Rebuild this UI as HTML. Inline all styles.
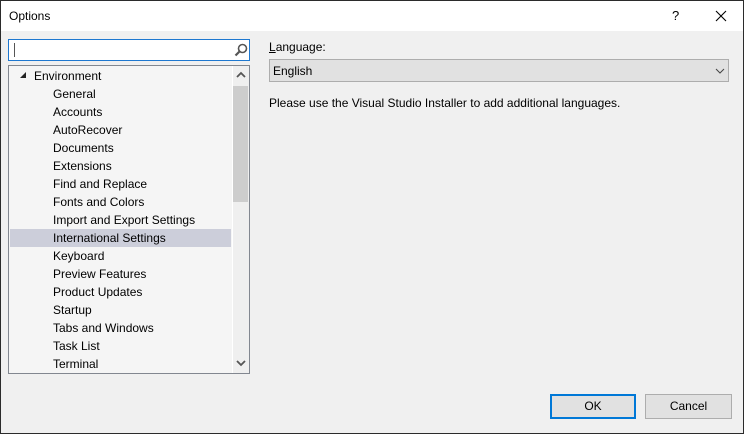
<!DOCTYPE html>
<html><head><style>
*{margin:0;padding:0;box-sizing:border-box}
body{width:744px;height:434px;background:#f0f0f0;font-family:"Liberation Sans",sans-serif;font-size:12px;color:#000;position:relative;overflow:hidden}
.win{position:absolute;left:0;top:0;width:744px;height:434px;border:1px solid #2b2b2b;}
.title{position:absolute;left:0;top:0;width:742px;height:30px;background:#fff}
.abs{position:absolute}
.row{position:absolute;left:1px;width:221px;height:18px;line-height:18px;padding-left:43px;white-space:nowrap}
</style></head><body>
<div class="win">
<div class="title">
 <div class="abs" style="left:8px;top:8px;font-size:12px">Options</div>
 <div class="abs" style="left:671px;top:7px;font-size:13px">?</div>
 <svg class="abs" style="left:714px;top:9px" width="12" height="12"><path d="M1 1L11 11M11 1L1 11" stroke="#000" stroke-width="1.1"/></svg>
</div>
<div class="abs" style="left:7px;top:38px;width:242px;height:22px;background:#fff;border:1px solid #1e78d0">
 <div class="abs" style="left:5px;top:3px;width:1px;height:14px;background:#555"></div>
 <svg class="abs" style="left:225px;top:3px" width="14" height="14"><circle cx="8.5" cy="5.5" r="4" fill="none" stroke="#555" stroke-width="1.6"/><path d="M5.5 8.5L1.5 12.5" stroke="#555" stroke-width="2.2"/></svg>
</div>
<div class="abs" style="left:7px;top:64px;width:242px;height:309px;background:#f5f5f5;border:1px solid #828790">
 <div class="abs" style="left:223px;top:0;width:17px;height:307px;background:#efefef;border-left:1px solid #fff"></div>
 <svg class="abs" style="left:227px;top:5px" width="10" height="8"><path d="M1 6L5 2L9 6" fill="none" stroke="#555" stroke-width="1.8"/></svg>
 <div class="abs" style="left:224px;top:20px;width:15px;height:116px;background:#cdcdcd"></div>
 <svg class="abs" style="left:227px;top:293px" width="10" height="8"><path d="M1 2L5 6L9 2" fill="none" stroke="#555" stroke-width="1.8"/></svg>
 <div class="row" style="top:163px;background:#ccceda"></div>
 <svg class="abs" style="left:10px;top:5px" width="8" height="8"><path d="M7 1L7 7L1 7Z" fill="#222"/></svg>
 <div class="row" style="top:1px;padding-left:24px">Environment</div>
 <div class="row" style="top:19px">General</div>
 <div class="row" style="top:37px">Accounts</div>
 <div class="row" style="top:55px">AutoRecover</div>
 <div class="row" style="top:73px">Documents</div>
 <div class="row" style="top:91px">Extensions</div>
 <div class="row" style="top:109px">Find and Replace</div>
 <div class="row" style="top:127px">Fonts and Colors</div>
 <div class="row" style="top:145px">Import and Export Settings</div>
 <div class="row" style="top:163px">International Settings</div>
 <div class="row" style="top:181px">Keyboard</div>
 <div class="row" style="top:199px">Preview Features</div>
 <div class="row" style="top:217px">Product Updates</div>
 <div class="row" style="top:235px">Startup</div>
 <div class="row" style="top:253px">Tabs and Windows</div>
 <div class="row" style="top:271px">Task List</div>
 <div class="row" style="top:289px;height:17px;overflow:hidden">Terminal</div>
</div>
<div class="abs" style="left:268px;top:39px"><u>L</u>anguage:</div>
<div class="abs" style="left:268px;top:58px;width:460px;height:23px;background:#e1e1e1;border:1px solid #adadad">
 <div class="abs" style="left:3px;top:4px">English</div>
 <svg class="abs" style="left:445px;top:8px" width="10" height="6"><path d="M1 1L5 5L9 1" fill="none" stroke="#444" stroke-width="1"/></svg>
</div>
<div class="abs" style="left:268px;top:95px">Please use the Visual Studio Installer to add additional languages.</div>
<div class="abs" style="left:549px;top:393px;width:86px;height:25px;background:#e1e1e1;border:2px solid #0078d7;text-align:center;line-height:21px">OK</div>
<div class="abs" style="left:644px;top:393px;width:87px;height:25px;background:#e1e1e1;border:1px solid #adadad;text-align:center;line-height:23px">Cancel</div>
</div>
</body></html>
